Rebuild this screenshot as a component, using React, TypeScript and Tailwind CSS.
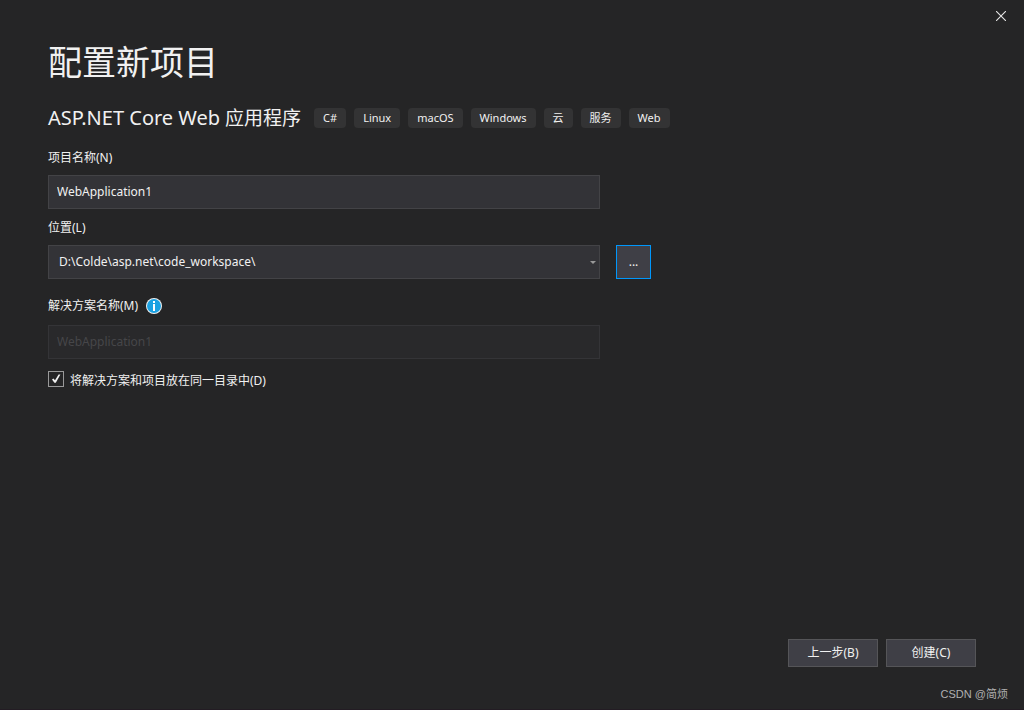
import React, { useState } from 'react';

const TAGS = ['C#', 'Linux', 'macOS', 'Windows', '云', '服务', 'Web'];

const InfoIcon = () => (
  <svg className="w-4 h-4" viewBox="0 0 16 16" aria-hidden="true">
    <circle cx="8" cy="8" r="8" fill="#f1f1f1" />
    <circle cx="8" cy="8" r="7" fill="#1ba1e2" />
    <path d="M7 3h2v2H7zM7 6h2v7H7z" fill="#fff" />
  </svg>
);

const CloseIcon = () => (
  <svg className="w-[10px] h-[10px]" viewBox="0 0 10 10" aria-hidden="true">
    <path d="M0 0l10 10M10 0L0 10" stroke="#e6e6e6" strokeWidth="1.1" />
  </svg>
);

export default function App() {
  const [name, setName] = useState('WebApplication1');
  const [sameFolder, setSameFolder] = useState(true);

  return (
    <div className="min-h-screen flex flex-col bg-[#252526] border-b border-[#231c23] text-[#f1f1f1] text-[12px] leading-5 font-['Noto_Sans','Noto_Sans_CJK_SC',sans-serif]">
      <header className="flex justify-end h-8 shrink-0">
        <button type="button" aria-label="关闭" className="w-[46px] flex items-center justify-center">
          <CloseIcon />
        </button>
      </header>

      <main className="flex-1 px-12 pt-[10px]">
        <h1 className="text-[34px] leading-10">配置新项目</h1>

        <div className="mt-5 h-8 flex items-center">
          <h2 className="text-[19px] leading-8 mr-[13px] whitespace-nowrap">
            <span className="text-[20px]">ASP.NET Core Web</span> 应用程序
          </h2>
          <ul className="flex gap-2 text-[11px] whitespace-nowrap">
            {TAGS.map((tag) => (
              <li key={tag} className="px-[9px] rounded-[4px] bg-[#333334]">{tag}</li>
            ))}
          </ul>
        </div>

        <form className="mt-[14px] flex flex-col gap-[7px]" onSubmit={(e) => e.preventDefault()}>
          <label htmlFor="name">项目名称(N)</label>
          <input
            id="name"
            className="w-full max-w-[552px] h-[34px] px-2 pb-px bg-[#333337] border border-[#434346] outline-none"
            value={name}
            onChange={(e) => setName(e.target.value)}
          />

          <label htmlFor="location" className="mt-[2px]">位置(L)</label>
          <div className="flex gap-4">
            <div className="relative w-full max-w-[552px]">
              <select
                id="location"
                className="w-full h-[34px] pl-[10px] pr-6 appearance-none bg-[#333337] border border-[#434346] outline-none"
              >
                <option>D:\Colde\asp.net\code_workspace\</option>
              </select>
              <svg className="absolute right-1 top-4 w-[6px] h-[3px] pointer-events-none" viewBox="0 0 6 3" aria-hidden="true">
                <path d="M0 0h6L3 3z" fill="#999" />
              </svg>
            </div>
            <button type="button" className="w-[35px] h-[34px] shrink-0 bg-[#3f3f46] border border-[#0097fb]">...</button>
          </div>

          <div className="mt-[10px] pb-[2px] flex items-center gap-2">
            <label htmlFor="solution">解决方案名称(M)</label>
            <InfoIcon />
          </div>
          <input
            id="solution"
            className="w-full max-w-[552px] h-[34px] px-2 pb-px bg-[#29292b] border border-[#343437] text-[#464649]"
            value={name}
            disabled
            readOnly
          />

          <label className="mt-[5px] flex items-start gap-[6px]">
            <span className="relative flex w-4 h-4">
              <input
                type="checkbox"
                className="w-4 h-4 appearance-none bg-[#252526] border border-[#999]"
                checked={sameFolder}
                onChange={(e) => setSameFolder(e.target.checked)}
              />
              {sameFolder && (
                <svg className="absolute inset-0 w-4 h-4 pointer-events-none" viewBox="0 0 16 16" aria-hidden="true">
                  <path d="M4 8.5L5.4 7.4L7 9.2L10.6 3.6H12.4L7.8 11.8H6.4z" fill="#f1f1f1" />
                </svg>
              )}
            </span>
            将解决方案和项目放在同一目录中(D)
          </label>
        </form>
      </main>

      <footer className="pb-[5px]">
        <div className="flex justify-end gap-2 px-12 pb-[17px]">
          <button type="button" className="w-[90px] h-7 bg-[#3f3f46] border border-[#555558]">上一步(B)</button>
          <button type="button" className="w-[90px] h-7 bg-[#3f3f46] border border-[#555558]">创建(C)</button>
        </div>
        <p className="px-4 text-right text-[11px] text-[#b0b0b0] font-['Liberation_Sans','Noto_Sans_CJK_SC',sans-serif]">CSDN @简烦</p>
      </footer>
    </div>
  );
}
